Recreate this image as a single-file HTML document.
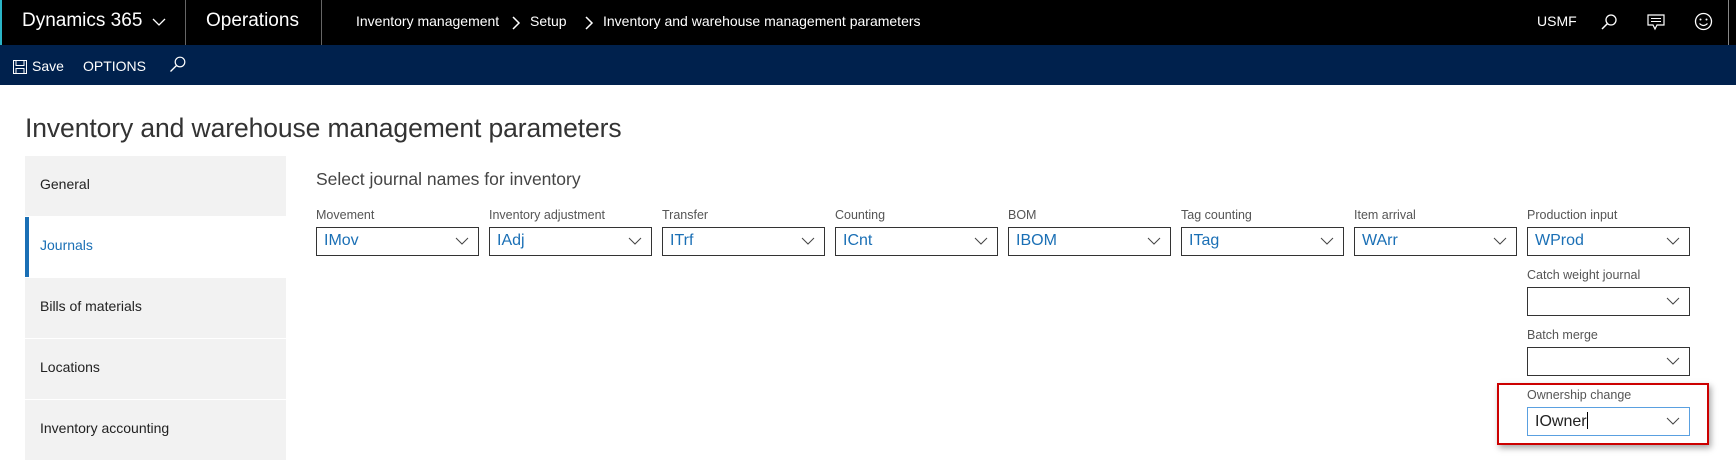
<!DOCTYPE html>
<html><head><meta charset="utf-8"><style>
*{margin:0;padding:0;box-sizing:border-box}
body{width:1736px;height:461px;overflow:hidden;background:#fff;font-family:"Segoe UI","Liberation Sans",sans-serif;position:relative}
.top{position:absolute;left:0;top:0;width:1736px;height:45px;background:#000;color:#fff}
.top .t{position:absolute;white-space:nowrap}
.div{position:absolute;top:0;width:1px;height:45px;background:#666}
.nav{position:absolute;left:0;top:45px;width:1736px;height:40px;background:#00214d;color:#fff;font-size:14px}
.nav span{position:absolute;top:13px}
.title{position:absolute;left:25px;top:113px;font-size:26.5px;color:#333;white-space:nowrap;letter-spacing:-0.1px}
.ln{position:absolute;left:25px;width:261px;height:60px;background:#f2f2f2;font-size:14px;color:#222;padding:20px 0 0 15px}
.ln.sel{background:#fff;color:#1a6fb5;border-left:4px solid #1a6fb5;padding-left:11px}
.sub{position:absolute;left:316px;top:169px;font-size:17.5px;color:#444}
.lab{position:absolute;font-size:12.5px;color:#555;white-space:nowrap}
.box{position:absolute;width:163px;height:29px;border:1px solid #333;font-size:16px;color:#1a6fb5;padding:4px 0 0 7px}
.box svg{position:absolute;right:9px;top:9px}
</style></head><body>
<div class="top">
<div style="position:absolute;left:0;top:0;width:2px;height:45px;background:#2ab5c8"></div>
<span class="t" style="left:22px;top:10px;font-size:19px">Dynamics 365</span>
<svg style="position:absolute;left:152px;top:18px" width="14" height="9"><path d="M1 1L7 7L13 1" stroke="#fff" fill="none" stroke-width="1.3"/></svg>
<div class="div" style="left:185px"></div>
<span class="t" style="left:206px;top:10px;font-size:19px">Operations</span>
<div class="div" style="left:321px"></div>
<span class="t" style="left:356px;top:13px;font-size:14px">Inventory management</span>
<svg style="position:absolute;left:512px;top:16px" width="9" height="14"><path d="M1 1L7 7L1 13" stroke="#fff" fill="none" stroke-width="1.5"/></svg>
<span class="t" style="left:530px;top:13px;font-size:14px">Setup</span>
<svg style="position:absolute;left:585px;top:16px" width="9" height="14"><path d="M1 1L7 7L1 13" stroke="#fff" fill="none" stroke-width="1.5"/></svg>
<span class="t" style="left:603px;top:13px;font-size:14px">Inventory and warehouse management parameters</span>
<span class="t" style="left:1537px;top:13px;font-size:14px">USMF</span>
<svg style="position:absolute;left:1600px;top:13px" width="18" height="18"><circle cx="11" cy="7" r="5" stroke="#fff" fill="none" stroke-width="1.3"/><path d="M7.5 10.5L2 16" stroke="#fff" stroke-width="1.5"/></svg>
<svg style="position:absolute;left:1647px;top:14px" width="18" height="17"><path d="M1 1H17V11H10L8 15L6 11H1Z" stroke="#fff" fill="none" stroke-width="1.2"/><path d="M4 4.5H14M4 7.5H14" stroke="#fff" stroke-width="1"/></svg>
<svg style="position:absolute;left:1694px;top:12px" width="19" height="19"><circle cx="9.5" cy="9.5" r="8" stroke="#fff" fill="none" stroke-width="1.3"/><circle cx="6.5" cy="7.5" r="1" fill="#fff"/><circle cx="12.5" cy="7.5" r="1" fill="#fff"/><path d="M5.5 11.5Q9.5 15.5 13.5 11.5" stroke="#fff" fill="none" stroke-width="1.2"/></svg>
<div class="div" style="left:1728px;background:#888"></div>
</div>
<div class="nav">
<svg style="position:absolute;left:13px;top:15px" width="14" height="14"><rect x="0.5" y="0.5" width="13" height="13" stroke="#fff" fill="none"/><rect x="3" y="0.5" width="8" height="5" stroke="#fff" fill="none"/><rect x="3" y="8.5" width="8" height="5" stroke="#fff" fill="none"/></svg>
<span style="left:32px">Save</span>
<span style="left:83px">OPTIONS</span>
<svg style="position:absolute;left:169px;top:11px" width="17" height="17"><circle cx="11" cy="6" r="4.8" stroke="#fff" fill="none" stroke-width="1.2"/><path d="M7.5 9.5L1.5 15.5" stroke="#fff" stroke-width="1.3"/></svg>
</div>
<div class="title">Inventory and warehouse management parameters</div>
<div class="ln" style="top:156px">General</div>
<div class="ln sel" style="top:217px">Journals</div>
<div class="ln" style="top:278px">Bills of materials</div>
<div class="ln" style="top:339px">Locations</div>
<div class="ln" style="top:400px">Inventory accounting</div>
<div class="sub">Select journal names for inventory</div>

<div class="lab" style="left:316px;top:208px">Movement</div><div class="box" style="left:316px;top:227px">IMov<svg width="14" height="9"><path d="M1 1L7 7L13 1" stroke="#444" fill="none"/></svg></div>
<div class="lab" style="left:489px;top:208px">Inventory adjustment</div><div class="box" style="left:489px;top:227px">IAdj<svg width="14" height="9"><path d="M1 1L7 7L13 1" stroke="#444" fill="none"/></svg></div>
<div class="lab" style="left:662px;top:208px">Transfer</div><div class="box" style="left:662px;top:227px">ITrf<svg width="14" height="9"><path d="M1 1L7 7L13 1" stroke="#444" fill="none"/></svg></div>
<div class="lab" style="left:835px;top:208px">Counting</div><div class="box" style="left:835px;top:227px">ICnt<svg width="14" height="9"><path d="M1 1L7 7L13 1" stroke="#444" fill="none"/></svg></div>
<div class="lab" style="left:1008px;top:208px">BOM</div><div class="box" style="left:1008px;top:227px">IBOM<svg width="14" height="9"><path d="M1 1L7 7L13 1" stroke="#444" fill="none"/></svg></div>
<div class="lab" style="left:1181px;top:208px">Tag counting</div><div class="box" style="left:1181px;top:227px">ITag<svg width="14" height="9"><path d="M1 1L7 7L13 1" stroke="#444" fill="none"/></svg></div>
<div class="lab" style="left:1354px;top:208px">Item arrival</div><div class="box" style="left:1354px;top:227px">WArr<svg width="14" height="9"><path d="M1 1L7 7L13 1" stroke="#444" fill="none"/></svg></div>
<div class="lab" style="left:1527px;top:208px">Production input</div><div class="box" style="left:1527px;top:227px">WProd<svg width="14" height="9"><path d="M1 1L7 7L13 1" stroke="#444" fill="none"/></svg></div>
<div class="lab" style="left:1527px;top:268px">Catch weight journal</div><div class="box" style="left:1527px;top:287px"><svg width="14" height="9"><path d="M1 1L7 7L13 1" stroke="#444" fill="none"/></svg></div>
<div class="lab" style="left:1527px;top:328px">Batch merge</div><div class="box" style="left:1527px;top:347px"><svg width="14" height="9"><path d="M1 1L7 7L13 1" stroke="#444" fill="none"/></svg></div>
<div style="position:absolute;left:1497px;top:383px;width:212px;height:62px;border:2px solid #c00;box-shadow:2px 3px 6px rgba(0,0,0,0.35)"></div>
<div class="lab" style="left:1527px;top:388px">Ownership change</div><div class="box" style="left:1527px;top:407px;border-color:#5aa0e0;color:#222">IOwner<span style="display:inline-block;width:1px;height:17px;background:#000;vertical-align:-3px"></span><svg width="14" height="9"><path d="M1 1L7 7L13 1" stroke="#444" fill="none"/></svg></div>
</body></html>
